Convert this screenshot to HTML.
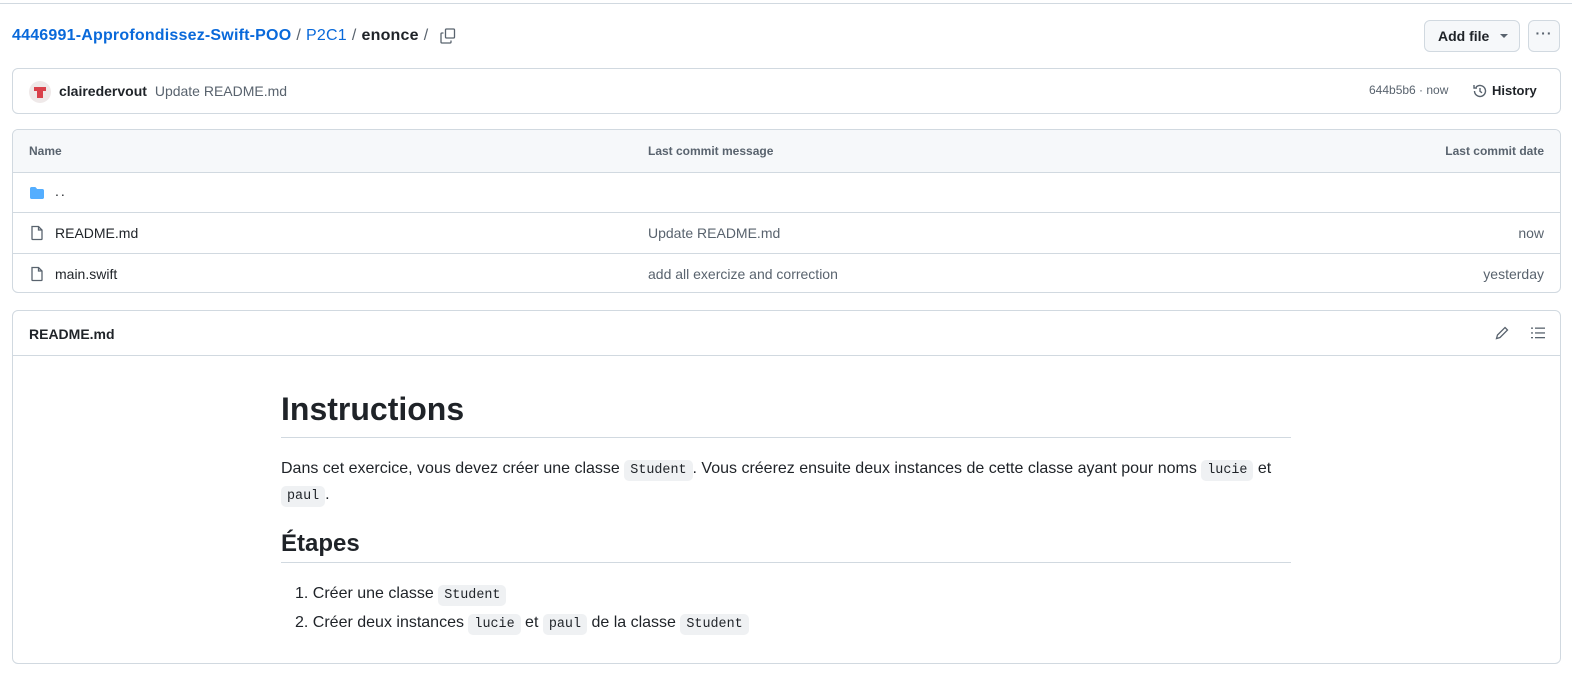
<!DOCTYPE html>
<html><head><meta charset="utf-8"><style>
*{box-sizing:border-box;margin:0;padding:0}
body{width:1572px;height:680px;background:#fff;font-family:"Liberation Sans",Arial,sans-serif;color:#1f2328;position:relative;overflow:hidden}
.topline{position:absolute;left:0;top:3px;width:1572px;height:1px;background:#d1d9e0}
.abs{position:absolute}
.crumb{left:12px;top:26px;font-size:16px;line-height:20px;white-space:nowrap;letter-spacing:0.2px}
.crumb a{color:#0969da;text-decoration:none}
.crumb .b{font-weight:bold}
.crumb .sep{color:#59636e;margin:0 5px}
.btn{border:1px solid #d1d9e0;border-radius:6px;background:#f6f8fa;font-size:14px;font-weight:bold}
.box{border:1px solid #d1d9e0;border-radius:6px}
.row{position:absolute;left:0;right:0;font-size:14px;border-top:1px solid #d1d9e0}
code{font-family:"Liberation Mono",monospace;font-size:13.4px;background:#eff1f3;border-radius:5px;padding:3px 6px}
.md{position:absolute;left:281px;width:1010px;font-size:16px;line-height:24px}
</style></head><body>
<div class="topline"></div>
<div class="abs crumb"><a class="b" href="#">4446991-Approfondissez-Swift-POO</a><span class="sep">/</span><a href="#">P2C1</a><span class="sep">/</span><span class="b">enonce</span><span class="sep">/</span></div>
<svg class="abs" style="left:440px;top:28px" width="16" height="16" viewBox="0 0 16 16" fill="none" stroke="#59636e" stroke-width="1.3"><rect x="5.5" y="1" width="9" height="9" rx="1"/><path d="M3.5 5H2a1 1 0 0 0-1 1v8a1 1 0 0 0 1 1h8a1 1 0 0 0 1-1v-1.5"/></svg>
<div class="abs btn" style="left:1424px;top:20px;width:96px;height:32px;line-height:30px;padding-left:13px">Add file<span style="position:absolute;left:75px;top:13px;border:4px solid transparent;border-top:4px solid #59636e"></span></div>
<div class="abs btn" style="left:1528px;top:20px;width:32px;height:32px;text-align:center;line-height:24px;color:#59636e;letter-spacing:1px">···</div>

<div class="abs box" style="left:12px;top:68px;width:1549px;height:46px">
 <div class="abs" style="left:16px;top:12px;width:22px;height:22px;border-radius:50%;background:#efe9e9;overflow:hidden"><div style="position:absolute;left:5px;top:6px;width:12px;height:4px;background:#d9424c"></div><div style="position:absolute;left:8px;top:10px;width:6px;height:7px;background:#d9424c"></div></div>
 <div class="abs" style="left:46px;top:14px;font-size:14px"><b>clairedervout</b> <span style="color:#59636e;margin-left:4px">Update README.md</span></div>
 <div class="abs" style="left:1356px;top:14px;font-size:12px;color:#59636e">644b5b6 · now</div>
 <svg class="abs" style="left:1459px;top:14px" width="16" height="16" viewBox="0 0 16 16" fill="none" stroke="#59636e" stroke-width="1.4"><path d="M2.5 8a5.5 5.5 0 1 0 1.6-3.9"/><path d="M2 2v3h3"/><path d="M8 5v3.3l2 1.5"/></svg>
 <div class="abs" style="left:1479px;top:14px;font-size:13px;font-weight:bold">History</div>
</div>

<div class="abs box" style="left:12px;top:129px;width:1549px;height:164px;overflow:hidden">
 <div class="abs" style="left:0;top:0;right:0;height:42px;background:#f6f8fa"></div>
 <div class="abs" style="left:16px;top:14px;font-size:12px;font-weight:bold;color:#59636e">Name</div>
 <div class="abs" style="left:635px;top:14px;font-size:12px;font-weight:bold;color:#59636e">Last commit message</div>
 <div class="abs" style="right:16px;top:14px;font-size:12px;font-weight:bold;color:#59636e">Last commit date</div>
 <div class="row" style="top:42px;height:40px">
  <svg class="abs" style="left:16px;top:12px" width="16" height="16" viewBox="0 0 16 16"><path fill="#54aeff" d="M1 3.5C1 2.7 1.7 2 2.5 2h3.3c.5 0 .9.2 1.2.6l.9 1.1c.1.2.3.3.6.3h5c.8 0 1.5.7 1.5 1.5v7c0 .8-.7 1.5-1.5 1.5h-11C1.7 14 1 13.3 1 12.5z"/></svg>
  <div class="abs" style="left:42px;top:10px;letter-spacing:2px">..</div>
 </div>
 <div class="row" style="top:82px;height:41px">
  <svg class="abs" style="left:16px;top:12px" width="16" height="16" viewBox="0 0 16 16" fill="none" stroke="#59636e" stroke-width="1.3"><path d="M3 1.5h6.5L13 5v9a.5.5 0 0 1-.5.5h-9A.5.5 0 0 1 3 14z"/><path d="M9.5 1.5V5H13"/></svg>
  <div class="abs" style="left:42px;top:12px">README.md</div>
  <div class="abs" style="left:635px;top:12px;color:#59636e">Update README.md</div>
  <div class="abs" style="right:16px;top:12px;color:#59636e">now</div>
 </div>
 <div class="row" style="top:123px;height:41px">
  <svg class="abs" style="left:16px;top:12px" width="16" height="16" viewBox="0 0 16 16" fill="none" stroke="#59636e" stroke-width="1.3"><path d="M3 1.5h6.5L13 5v9a.5.5 0 0 1-.5.5h-9A.5.5 0 0 1 3 14z"/><path d="M9.5 1.5V5H13"/></svg>
  <div class="abs" style="left:42px;top:12px">main.swift</div>
  <div class="abs" style="left:635px;top:12px;color:#59636e">add all exercize and correction</div>
  <div class="abs" style="right:16px;top:12px;color:#59636e">yesterday</div>
 </div>
</div>

<div class="abs box" style="left:12px;top:310px;width:1549px;height:354px">
 <div class="abs" style="left:16px;top:15px;font-size:14px;font-weight:bold">README.md</div>
 <div class="abs" style="left:0;right:0;top:44px;height:1px;background:#d1d9e0"></div>
 <svg class="abs" style="left:1481px;top:14px" width="16" height="16" viewBox="0 0 16 16" fill="none" stroke="#59636e" stroke-width="1.3"><path d="M11 2.5l2.5 2.5L6 12.5 2.5 13.5 3.5 10z"/></svg>
 <svg class="abs" style="left:1517px;top:14px" width="16" height="16" viewBox="0 0 16 16" fill="#59636e"><rect x="1" y="2.5" width="2" height="1.3"/><rect x="5" y="2.5" width="10" height="1.3"/><rect x="1" y="7.3" width="2" height="1.3"/><rect x="5" y="7.3" width="10" height="1.3"/><rect x="1" y="12" width="2" height="1.3"/><rect x="5" y="12" width="10" height="1.3"/></svg>
</div>

<div class="md" style="top:389px;font-size:32px;line-height:40px;font-weight:bold">Instructions</div>
<div class="abs" style="left:281px;top:437px;width:1010px;height:1px;background:#d1d9e0"></div>
<div class="md" style="top:457px">Dans cet exercice, vous devez créer une classe <code>Student</code>. Vous créerez ensuite deux instances de cette classe ayant pour noms <code>lucie</code> et<br><code>paul</code>.</div>
<div class="md" style="top:529px;font-size:24px;line-height:30px;font-weight:bold">Étapes</div>
<div class="abs" style="left:281px;top:562px;width:1010px;height:1px;background:#d1d9e0"></div>
<div class="md" style="top:582px;left:295px">1. Créer une classe <code>Student</code></div>
<div class="md" style="top:611px;left:295px">2. Créer deux instances <code>lucie</code> et <code>paul</code> de la classe <code>Student</code></div>
</body></html>
